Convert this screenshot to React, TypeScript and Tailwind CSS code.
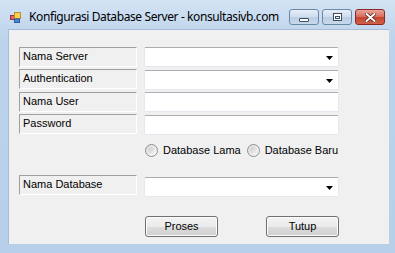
import React from "react";

const labelCls =
  "w-[118px] h-[20px] border-t border-l border-t-[#a0a0a0] border-l-[#a0a0a0] border-b border-r border-b-white border-r-white pl-[3px] pt-[1px] text-[11px] leading-[14px] text-black";

const inputCls =
  "w-[195px] h-[20px] bg-white border border-[#e3e9ef] border-t-[#abadb3] rounded-[2px] relative";

function Arrow() {
  return (
    <svg
      className="absolute right-[5px] top-[8px]"
      width="7"
      height="4"
      viewBox="0 0 7 4"
    >
      <polygon points="0,0 7,0 3.5,4" fill="#000" />
    </svg>
  );
}

function Radio() {
  return (
    <div className="w-[13px] h-[13px] rounded-full border border-[#8e8f8f] bg-gradient-to-br from-[#dcdcdc] to-[#fbfbfb] flex items-center justify-center">
      <div className="w-[7px] h-[7px] rounded-full bg-gradient-to-br from-[#cbcbcb] to-[#f4f4f4]" />
    </div>
  );
}

function Btn({ children }: { children: React.ReactNode }) {
  return (
    <div className="w-[73px] h-[21px] rounded-[3px] border border-[#707070] bg-[linear-gradient(#f2f2f2_0%,#ebebeb_50%,#dddddd_50%,#cfcfcf_100%)] flex items-center justify-center text-[11px] text-black shadow-[inset_0_0_0_1px_#fcfcfc]">
      {children}
    </div>
  );
}

export default function App() {
  return (
    <div
      className="w-[395px] h-[253px] bg-[linear-gradient(#d3e3f4,#bcd3eb_40px,#b7cfe9)] flex flex-col overflow-hidden"
      style={{ fontFamily: '"Liberation Sans", Arial, sans-serif' }}
    >
      {/* Title bar */}
      <div className="h-[29px] flex items-start shrink-0">
        <svg className="ml-[10px] mt-[12px] shrink-0" width="12" height="12" viewBox="0 0 12 12">
          <rect x="0.5" y="3.5" width="4" height="4" fill="#e0646a" stroke="#a03038" />
          <rect x="4.5" y="0.5" width="6" height="6" fill="#f6d34a" stroke="#b8902a" />
          <rect x="4.5" y="7" width="5" height="3.5" fill="#4f86d6" stroke="#2a5aa8" />
        </svg>
        <div
          className="ml-[7px] mt-[9px] text-[12px] leading-[16px] text-black whitespace-nowrap tracking-[-0.4px]"
          style={{ fontFamily: '"Segoe UI", "Noto Sans", sans-serif' }}
        >
          Konfigurasi Database Server - konsultasivb.com
        </div>
        <div className="ml-auto mr-[10px] mt-[9px] flex gap-[3px] shrink-0">
          <div className="w-[30px] h-[16px] rounded-[3px] border border-[#6d87a8] bg-[linear-gradient(#e6eef8,#cfdcec_50%,#bccde3_50%,#c9d9ec)] flex items-center justify-center">
            <div className="w-[10px] h-[4px] mt-[5px] border border-[#3b4b60] bg-white rounded-[1px]" />
          </div>
          <div className="w-[30px] h-[16px] rounded-[3px] border border-[#6d87a8] bg-[linear-gradient(#e6eef8,#cfdcec_50%,#bccde3_50%,#c9d9ec)] flex items-center justify-center">
            <div className="w-[9px] h-[8px] border border-[#3b4b60] bg-white flex items-center justify-center">
              <div className="w-[5px] h-[3px] mt-[1px] border border-[#3b4b60]" />
            </div>
          </div>
          <div className="w-[30px] h-[16px] rounded-[3px] border border-[#8b2a22] bg-[linear-gradient(#e8a59a,#d86a5a_50%,#c5432f_50%,#d2614a)] flex items-center justify-center">
            <svg width="11" height="9" viewBox="0 0 11 9">
              <path d="M1.5 1 L9.5 8 M9.5 1 L1.5 8" stroke="#4a1a14" strokeWidth="3.4" strokeLinecap="round" />
              <path d="M1.5 1 L9.5 8 M9.5 1 L1.5 8" stroke="#ffffff" strokeWidth="2" strokeLinecap="round" />
            </svg>
          </div>
        </div>
      </div>

      {/* Client area */}
      <div className="ml-[8px] mr-[6px] h-[215px] bg-[#f0f0f0] border-t border-l border-[#a9bdd6] flex flex-col pl-[10px] pt-[17px] text-[11px]">
        <div className="flex gap-[7px] h-[20px]">
          <div className={labelCls}>Nama Server</div>
          <div className={inputCls}>
            <Arrow />
          </div>
        </div>
        <div className="flex gap-[7px] h-[20px] mt-[2px]">
          <div className={labelCls}>Authentication</div>
          <div className={inputCls + " mt-[1px]"}>
            <Arrow />
          </div>
        </div>
        <div className="flex gap-[7px] h-[20px] mt-[3px]">
          <div className={labelCls}>Nama User</div>
          <div className={inputCls}></div>
        </div>
        <div className="flex gap-[7px] h-[20px] mt-[2px]">
          <div className={labelCls}>Password</div>
          <div className={inputCls + " mt-[1px]"}></div>
        </div>

        <div className="flex items-center h-[16px] mt-[8px] ml-[126px]">
          <Radio />
          <span className="ml-[5px] text-[11px]">Database Lama</span>
          <div className="ml-[6px]">
            <Radio />
          </div>
          <span className="ml-[5px] text-[11px]">Database Baru</span>
        </div>

        <div className="flex gap-[7px] h-[20px] mt-[17px]">
          <div className={labelCls}>Nama Database</div>
          <div className={inputCls + " mt-[2px]"}>
            <Arrow />
          </div>
        </div>

        <div className="flex mt-[21px] ml-[126px] gap-[48px]">
          <Btn>Proses</Btn>
          <Btn>Tutup</Btn>
        </div>
      </div>
    </div>
  );
}
